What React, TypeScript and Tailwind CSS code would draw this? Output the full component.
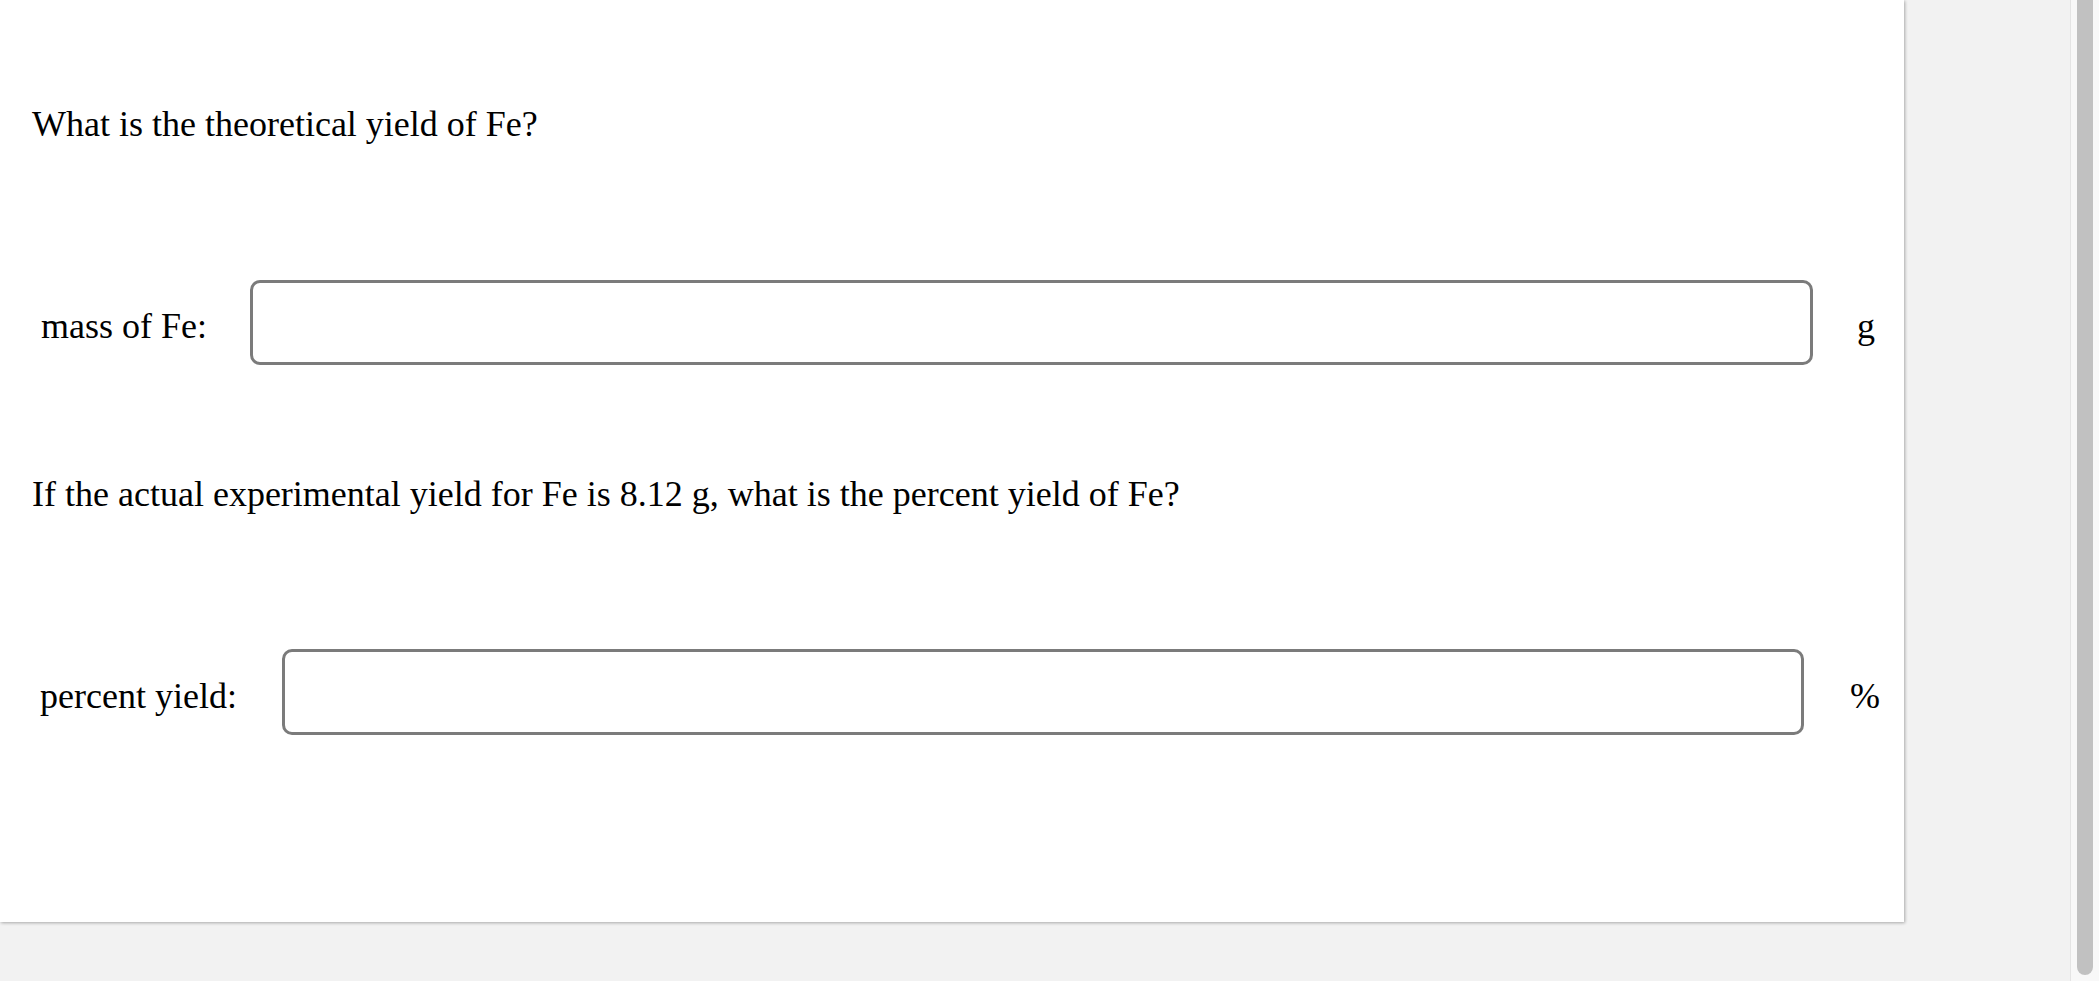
export default function App() {
  return (
    <div className="flex h-[981px] w-full overflow-hidden bg-[#f2f2f2] font-['Liberation_Serif','Times_New_Roman',serif] text-black">
      <div className="flex-1">
        <div className="h-[922px] w-[1904px] bg-white pl-[32px] pr-[30px] pt-[104px] shadow-[1px_1px_3px_rgba(0,0,0,0.3)]">
          {/* Question 1 */}
          <p className="text-[36px] leading-[41px]">What is the theoretical yield of Fe?</p>

          <div className="mt-[135px] flex h-[85px] items-center">
            <label className="pl-[9px] pt-[8px] text-[36px] leading-[41px]">mass of Fe:</label>
            <input
              type="text"
              className="ml-[43px] h-[85px] flex-1 rounded-[10px] border-[3px] border-[#7b7b7b] bg-white px-3 outline-none"
            />
            <span className="ml-[44px] w-[17px] pt-[8px] text-[36px] leading-[41px]">g</span>
          </div>

          {/* Question 2 */}
          <p className="mt-[109px] text-[36px] leading-[41px]">
            If the actual experimental yield for Fe is 8.12 g, what is the percent yield of Fe?
          </p>

          <div className="mt-[134px] flex h-[86px] items-center">
            <label className="pl-[8px] pt-[8px] text-[36px] leading-[41px]">percent yield:</label>
            <input
              type="text"
              className="ml-[45px] h-[86px] flex-1 rounded-[10px] border-[3px] border-[#7b7b7b] bg-white px-3 outline-none"
            />
            <span className="ml-[46px] w-[24px] pt-[8px] text-[36px] leading-[41px]">%</span>
          </div>
        </div>
      </div>

      {/* scrollbar */}
      <div className="flex w-[29px] border-l border-[#e4e4e4] bg-[#f8f8f8] pl-[6px] pr-[5px]">
        <div className="h-[975px] w-[16px] rounded-b-full bg-[#c1c1c1]" />
      </div>
    </div>
  );
}
